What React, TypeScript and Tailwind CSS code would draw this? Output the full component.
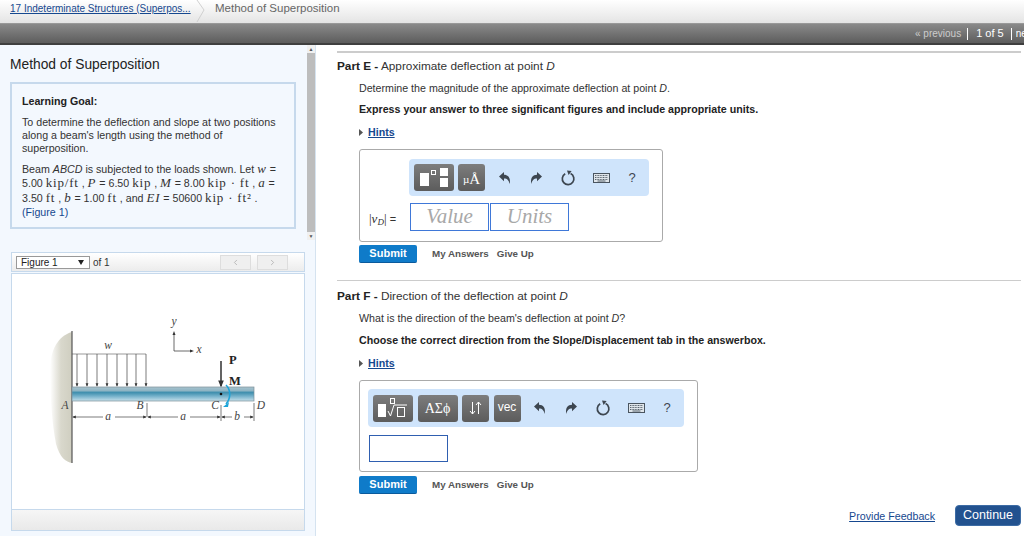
import { ChevronLeft, ChevronRight } from "lucide-react";

const serif = "font-['Liberation_Serif',serif]";
const math = "font-['Liberation_Serif',serif] text-[13px] tracking-[0.8px]";
const darkBtn = "rounded-[3px] bg-gradient-to-b from-[#7d7d7d] to-[#5c5c5c] text-white";

function Undo() {
  return (
    <svg width="14" height="14" viewBox="0 0 14 14">
      <path d="M1 5.5 L6 1 V3.8 C10 3.8 13 6.8 11.6 13 C10.8 9.6 9.5 7.6 6 7.6 V10.2 Z" fill="#3d4650" />
    </svg>
  );
}

function Redo() {
  return (
    <svg width="14" height="14" viewBox="0 0 14 14">
      <path d="M13 5.5 L8 1 V3.8 C4 3.8 1 6.8 2.4 13 C3.2 9.6 4.5 7.6 8 7.6 V10.2 Z" fill="#3d4650" />
    </svg>
  );
}

function Reset() {
  return (
    <svg width="16" height="16" viewBox="0 0 16 16" fill="none">
      <path d="M5.2 3.8 A5.8 5.8 0 1 0 10.6 3.6" stroke="#3d4650" strokeWidth="1.7" />
      <path d="M7 0.5 L11.6 0.9 L8.6 5 Z" fill="#3d4650" />
    </svg>
  );
}

function Keyboard() {
  return (
    <svg width="17" height="10" viewBox="0 0 17 10">
      <rect x="0.5" y="0.5" width="16" height="9" fill="#dfe5ea" stroke="#4a5560" />
      <path d="M2 2.5H15M2 4.5H15M2 6.5H15" stroke="#59646e" strokeDasharray="1 0.6" />
      <path d="M4.5 8H12.5" stroke="#59646e" />
    </svg>
  );
}

function ToolIcons() {
  return (
    <div className="flex items-center gap-[17px]">
      <Undo />
      <Redo />
      <Reset />
      <Keyboard />
      <span className="ml-[-2px] w-[14px] text-center text-[13px] text-[#3d4650]">?</span>
    </div>
  );
}

function SubmitRow() {
  return (
    <div className="flex items-center text-[9.8px] font-bold text-[#555]">
      <button className="h-[18px] w-[58px] rounded-[2px] border-b border-[#0a5a9c] bg-[#0f7bc9] text-[11px] font-bold text-white">
        Submit
      </button>
      <span className="ml-[15px]">My Answers</span>
      <span className="ml-[8px]">Give Up</span>
    </div>
  );
}

function Hints() {
  return (
    <div className="mt-[9px] flex items-center gap-[5px] text-[10.67px] leading-[14px]">
      <svg width="4" height="7" viewBox="0 0 4 7">
        <path d="M0 0 L4 3.5 L0 7 Z" fill="#555" />
      </svg>
      <a className="font-bold text-[#16488f] underline">Hints</a>
    </div>
  );
}

function BeamFigure() {
  const load = [65, 75, 85, 95, 105, 115, 124, 134];
  return (
    <svg width="293" height="234" viewBox="0 0 293 234">
      <defs>
        <linearGradient id="beam" x1="0" y1="0" x2="0" y2="1">
          <stop offset="0" stopColor="#a9c4cf" />
          <stop offset="0.25" stopColor="#8fb5c4" />
          <stop offset="0.4" stopColor="#3f8fae" />
          <stop offset="0.7" stopColor="#7fb7cf" />
          <stop offset="1" stopColor="#c6e0ea" />
        </linearGradient>
        <linearGradient id="wall" x1="0" y1="0" x2="1" y2="0">
          <stop offset="0" stopColor="#ffffff" />
          <stop offset="0.5" stopColor="#d9d8cc" />
          <stop offset="1" stopColor="#cfcec0" />
        </linearGradient>
        <marker id="tip" markerWidth="5" markerHeight="5" refX="4" refY="2.5" orient="auto-start-reverse">
          <path d="M0 0.5 L5 2.5 L0 4.5 Z" fill="#333" />
        </marker>
      </defs>
      <path d="M60 58 C46 62 38 76 38 96 C38 120 40 150 44 170 C48 184 54 188 60 189 Z" fill="url(#wall)" />
      <path d="M60 57 V189" stroke="#555" strokeWidth="1.2" />
      <path d="M60 80 H134" stroke="#555" strokeWidth="0.6" />
      {load.map((x) => (
        <path key={x} d={`M${x} 80 V112`} stroke="#444" strokeWidth="0.7" markerEnd="url(#tip)" />
      ))}
      <rect x="60" y="113" width="182" height="14" fill="url(#beam)" stroke="#7b8f99" strokeWidth="0.7" />
      <path d="M209 87 V112" stroke="#222" strokeWidth="1.4" markerEnd="url(#tip)" />
      <circle cx="209" cy="120" r="1.3" fill="#111" />
      <path d="M214 111 C219 116 219 124 214 130" stroke="#1ea4d8" strokeWidth="1.6" fill="none" />
      <path d="M211 133 L217 128 L216 133 Z" fill="#1ea4d8" />
      <path d="M162 60 V77 H180" fill="none" stroke="#444" strokeWidth="0.8" />
      <path d="M162 57 L160.5 61 H163.5 Z M182 77 L178 75.5 V78.5 Z" fill="#333" />
      <g stroke="#444" strokeWidth="0.7" fill="none">
        <path d="M135 129 V143 M209 131 V147 M242 129 V147" />
        <path d="M91 143 H61" markerEnd="url(#tip)" />
        <path d="M103 143 H134" markerEnd="url(#tip)" />
        <path d="M166 143 H136" markerEnd="url(#tip)" />
        <path d="M178 143 H208" markerEnd="url(#tip)" />
        <path d="M220 143 H210" markerEnd="url(#tip)" />
        <path d="M232 143 H241" markerEnd="url(#tip)" />
      </g>
      <g fontFamily="'Liberation Serif', serif" fontSize="11.5" fontStyle="italic" fill="#444" textAnchor="middle">
        <text x="162" y="51">y</text>
        <text x="187" y="79">x</text>
        <text x="96" y="75">w</text>
        <text x="53" y="135">A</text>
        <text x="128" y="135">B</text>
        <text x="203" y="135">C</text>
        <text x="249" y="135">D</text>
        <text x="96" y="146">a</text>
        <text x="171" y="146">a</text>
        <text x="225" y="146">b</text>
      </g>
      <g fontFamily="'Liberation Serif', serif" fontSize="12.5" fontWeight="bold" fill="#222">
        <text x="217" y="90">P</text>
        <text x="217" y="111">M</text>
      </g>
    </svg>
  );
}

export default function App() {
  return (
    <div className="flex h-[536px] w-[1024px] flex-col overflow-hidden bg-white font-['Liberation_Sans',Arial,sans-serif] text-[12px] text-[#333]">
      {/* Breadcrumb */}
      <div className="flex h-[23px] items-start bg-gradient-to-b from-white to-[#e4e4e4] pt-[2px] text-[10px] leading-[12px]">
        <a className="ml-[10px] w-[180px] whitespace-nowrap pt-px text-[#16488f] underline">17 Indeterminate Structures (Superpos...</a>
        <svg className="ml-[6px] mt-[-2px]" width="9" height="23" viewBox="0 0 9 23" fill="none">
          <path d="M1 0 L8 10 L1 22" stroke="#d0d0d0" />
        </svg>
        <span className="ml-[10px] text-[11.5px] text-[#666]">Method of Superposition</span>
      </div>
      <div className="flex h-[22px] items-center border-y border-b-2 border-t-[#999] border-b-[#3f3f3f] bg-gradient-to-b from-[#8a8a8a] to-[#5d5d5d] pl-[915px] text-white">
        <span className="whitespace-nowrap text-[10px] text-[#ccc]">« previous</span>
        <span className="ml-[6px] h-[12px] border-l border-white" />
        <span className="ml-[8px] whitespace-nowrap text-[11px]">1 of 5</span>
        <span className="ml-[7px] h-[12px] border-l border-white" />
        <span className="ml-[4px] w-[9px] overflow-hidden text-[10px]">ne</span>
      </div>

      <div className="flex min-h-0 flex-1">
        {/* Left panel */}
        <div className="w-[316px] shrink-0 border-r border-[#d5e3f0] bg-[#f3f8fe]">
          <div className="flex h-[195px]">
            <div className="w-[307px] overflow-hidden pl-[10px]">
              <h1 className="mt-[12px] text-[13.8px] leading-[16px] text-[#222]">Method of Superposition</h1>
              <div className="mt-[9px] h-[147px] w-[286px] border-2 border-[#c6d9ec] px-[10px] pt-[11px] text-[10.67px] leading-[13px]">
                <p className="font-bold text-[#222]">Learning Goal:</p>
                <p className="mt-[8px]">To determine the deflection and slope at two positions along a beam's length using the method of superposition.</p>
                <p className="mt-[7px] leading-[14.4px]">
                  Beam <i>ABCD</i> is subjected to the loads shown. Let <i className={math}>w</i> =<br />
                  5.00 <span className={math}>kip/ft</span> , <i className={math}>P</i> = 6.50 <span className={math}>kip</span> , <i className={math}>M</i> = 8.00 <span className={math}>kip · ft</span> , <i className={math}>a</i> =<br />
                  3.50 <span className={math}>ft</span> , <i className={math}>b</i> = 1.00 <span className={math}>ft</span> , and <i className={math}>EI</i> = 50600 <span className={math}>kip · ft²</span> .<br />
                  <a className="text-[#16488f]">(Figure 1)</a>
                </p>
              </div>
            </div>
            <div className="flex w-[8px] flex-col items-center bg-[#f0f0f0] text-[#555]">
              <span className="h-[8px] text-[5px] leading-[8px]">▲</span>
              <div className="w-full flex-1 bg-[#bdbdbd]" />
              <span className="h-[8px] text-[5px] leading-[8px]">▼</span>
            </div>
          </div>
          <div className="ml-[11px] mt-[12px] w-[294px] border border-[#c6d9ec]">
            <div className="flex h-[18px] items-center bg-gradient-to-b from-white to-[#ececec] pl-[4px] text-[10px]">
              <div className="flex h-[13px] w-[74px] items-center justify-between border border-[#999] bg-white pl-[4px] pr-[5px] text-[#222]">
                <span>Figure 1</span>
                <svg width="6" height="5" viewBox="0 0 6 5">
                  <path d="M0 0 H6 L3 5 Z" fill="#222" />
                </svg>
              </div>
              <span className="ml-[3px]">of 1</span>
              <div className="ml-[110px] flex gap-[6px]">
                <div className="flex h-[15px] w-[31px] items-center justify-center border border-[#ddd] bg-[#efefef]">
                  <ChevronLeft size={9} className="text-[#aaa]" />
                </div>
                <div className="flex h-[15px] w-[31px] items-center justify-center border border-[#ddd] bg-[#efefef]">
                  <ChevronRight size={9} className="text-[#aaa]" />
                </div>
              </div>
            </div>
          </div>
          <div className="ml-[11px] mt-[1px] h-[258px] w-[294px] border border-[#c6d9ec]">
            <div className="h-[235px] bg-white">
              <BeamFigure />
            </div>
            <div className="h-[21px] border-t border-[#c6d9ec] bg-gradient-to-b from-[#f6f6f6] to-[#e9e9e9]" />
          </div>
        </div>

        {/* Right content */}
        <div className="min-w-0 flex-1 pl-[21px] pr-[3px]">
          <div className="mt-[6px] h-[2px] bg-[#ccc]" />
          <h2 className="mt-[6px] text-[11.8px] leading-[14px]">
            <b className="text-[#222]">Part E -</b> Approximate deflection at point <i>D</i>
          </h2>
          <div className="pl-[22px]">
            <p className="mt-[8px] text-[10.67px] leading-[14px]">Determine the magnitude of the approximate deflection at point <i>D</i>.</p>
            <p className="mt-[7px] text-[10.67px] font-bold leading-[14px] text-[#222]">Express your answer to three significant figures and include appropriate units.</p>
            <Hints />
            <div className="mb-[3px] mt-[10px] h-[93px] w-[304px] rounded-[3px] border border-[#aaa] pl-[49px] pt-[9px]">
              <div className="flex h-[37px] w-[240px] items-center rounded-[4px] bg-[#cfe4fb] pl-[5px]">
                <div className={`flex h-[27px] w-[40px] items-center justify-center gap-[2px] ${darkBtn}`}>
                  <span className="mt-[3px] h-[13px] w-[9px] bg-white" />
                  <span className="mb-[10px] h-[5px] w-[5px] border border-white" />
                  <span className="ml-[2px] flex w-[8px] flex-col gap-[2px]">
                    <span className="h-[8px] bg-white" />
                    <span className="h-[9px] bg-white" />
                  </span>
                </div>
                <div className={`ml-[4px] flex h-[27px] w-[27px] items-end justify-center pb-[3px] text-[15px] leading-[18px] ${darkBtn} ${serif}`}>
                  <span className="text-[11px]">µ</span>Å
                </div>
                <div className="ml-[13px]">
                  <ToolIcons />
                </div>
              </div>
              <div className="relative ml-px mt-[7px] flex gap-[1px]">
                <span className={`absolute left-[-41px] top-[6px] whitespace-nowrap text-[13px] ${serif}`}>
                  |<i>v<sub className="text-[9px]">D</sub></i>| <span className="font-['Liberation_Sans'] text-[11px]">=</span>
                </span>
                <div className={`flex h-[28px] w-[79px] items-center justify-center border border-[#3f78d8] text-[21px] italic text-[#a8a8a8] ${serif}`}>Value</div>
                <div className={`flex h-[28px] w-[79px] items-center justify-center border border-[#3f78d8] text-[21px] italic text-[#a8a8a8] ${serif}`}>Units</div>
              </div>
            </div>
            <SubmitRow />
          </div>

          <div className="mt-[17px] h-px bg-[#ccc]" />
          <h2 className="mt-[8px] text-[11.8px] leading-[14px]">
            <b className="text-[#222]">Part F -</b> Direction of the deflection at point <i>D</i>
          </h2>
          <div className="pl-[22px]">
            <p className="mt-[8px] text-[10.67px] leading-[14px]">What is the direction of the beam's deflection at point <i>D</i>?</p>
            <p className="mt-[8px] text-[10.67px] font-bold leading-[14px] text-[#222]">Choose the correct direction from the Slope/Displacement tab in the answerbox.</p>
            <Hints />
            <div className="mb-[4px] mt-[10px] h-[92px] w-[339px] rounded-[3px] border border-[#aaa] pl-[8px] pt-[8px]">
              <div className="flex h-[38px] w-[316px] items-center gap-[4.5px] rounded-[4px] bg-[#cfe4fb] pl-[5px]">
                <div className={`flex h-[27px] w-[40px] items-center justify-center ${darkBtn}`}>
                  <svg width="32" height="20" viewBox="0 0 32 20" fill="none" stroke="white">
                    <rect x="1" y="6" width="8" height="13" fill="white" stroke="none" />
                    <rect x="13.5" y="0.5" width="4" height="5" />
                    <path d="M11 13 L13.5 18 L17 7 H30" />
                    <rect x="20.5" y="9.5" width="7" height="9" />
                  </svg>
                </div>
                <div className={`flex h-[27px] w-[40px] items-center justify-center text-[14px] ${darkBtn} ${serif}`}>ΑΣϕ</div>
                <div className={`flex h-[27px] w-[27px] items-center justify-center ${darkBtn}`}>
                  <svg width="13" height="14" viewBox="0 0 13 14" fill="none" stroke="white">
                    <path d="M3.5 1 V13 M1 10 L3.5 13 L6 10 M9.5 13 V1 M7 4 L9.5 1 L12 4" />
                  </svg>
                </div>
                <div className={`h-[27px] w-[27px] pt-[3px] text-center text-[12px] ${darkBtn}`}>vec</div>
                <div className="ml-[8px]">
                  <ToolIcons />
                </div>
              </div>
              <div className="ml-px mt-[8px] h-[27px] w-[79px] border border-[#2f5fb0]" />
            </div>
            <SubmitRow />
          </div>

          <div className="mt-[11px] flex items-center justify-end">
            <a className="text-[10.67px] text-[#16488f] underline">Provide Feedback</a>
            <button className="ml-[20px] h-[21px] w-[66px] rounded-[4px] border border-[#3d6ca5] bg-[#22528f] text-[12.5px] text-white">Continue</button>
          </div>
        </div>
      </div>
    </div>
  );
}
